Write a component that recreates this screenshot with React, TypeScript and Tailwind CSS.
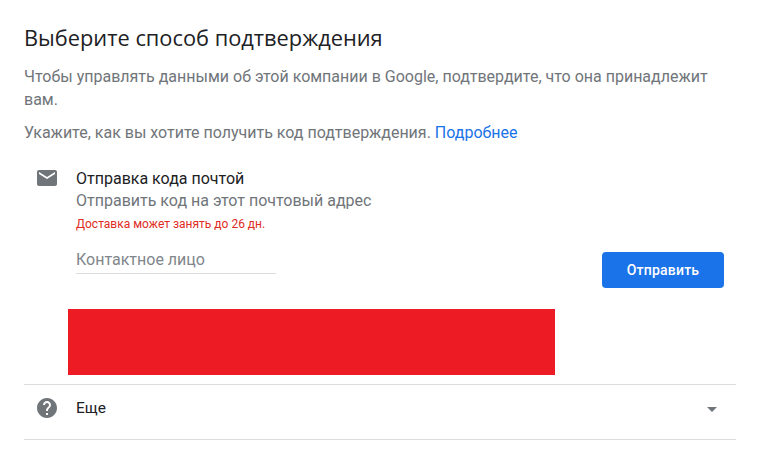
import React from "react";

const MailIcon = () => (
  <svg width="24" height="24" viewBox="0 0 24 24" fill="#70757a">
    <path d="M20 4H4c-1.1 0-2 .9-2 2v12c0 1.1.9 2 2 2h16c1.1 0 2-.9 2-2V6c0-1.1-.9-2-2-2zm0 4l-8 5-8-5V6l8 5 8-5v2z" />
  </svg>
);

const HelpIcon = () => (
  <svg width="24" height="24" viewBox="0 0 24 24" fill="#70757a">
    <path d="M12 2C6.48 2 2 6.48 2 12s4.48 10 10 10 10-4.48 10-10S17.52 2 12 2zm1 17h-2v-2h2v2zm2.07-7.75l-.9.92C13.45 12.9 13 13.5 13 15h-2v-.5c0-1.1.45-2.1 1.17-2.83l1.24-1.26c.37-.36.59-.86.59-1.41 0-1.1-.9-2-2-2s-2 .9-2 2H8c0-2.21 1.79-4 4-4s4 1.79 4 4c0 .88-.36 1.68-.93 2.25z" />
  </svg>
);

export default function App() {
  return (
    <div className="w-[777px] h-[449px] overflow-hidden bg-white font-['Roboto',sans-serif] text-[16px]">
      <div className="w-[712px] ml-6 pt-[23px]">
        {/* Title */}
        <h1 className="font-['Open_Sans','Roboto',sans-serif] font-normal text-[21.8px] leading-[30px] text-[#202124]">
          Выберите способ подтверждения
        </h1>
        <p className="mt-[12px] text-[#70757a] leading-[23px] w-[700px]">
          Чтобы управлять данными об этой компании в Google, подтвердите, что она принадлежит вам.
        </p>
        <p className="mt-[10px] text-[#70757a] leading-[24px]">
          Укажите, как вы хотите получить код подтверждения.{" "}
          <a className="text-[#1a73e8]">Подробнее</a>
        </p>

        {/* Mail option */}
        <div className="mt-[24px] flex">
          <div className="w-[41px] ml-[11px] -mt-[3px] shrink-0">
            <MailIcon />
          </div>
          <div className="flex-1 flex flex-col">
            <div className="text-[#202124] font-[450] leading-[20px]">Отправка кода почтой</div>
            <div className="text-[#70757a] leading-[22px] mt-[1px]">Отправить код на этот почтовый адрес</div>
            <div className="text-[#e02b24] text-[12px] leading-[16px] mt-[4px]">Доставка может занять до 26 дн.</div>
            <div className="flex items-start justify-between pr-3">
              <div className="mt-[18px] w-[200px] h-[24px] border-b border-[#dadce0] text-[#80868b] leading-[20px]">
                Контактное лицо
              </div>
              <button className="mt-[20px] w-[122px] h-9 rounded bg-[#1a73e8] text-white text-[14px] tracking-[0.2px] font-medium">
                Отправить
              </button>
            </div>
          </div>
        </div>
      </div>

      <div className="ml-[68px] mt-[21px] w-[487px] h-[66px] bg-[#ed1c24]" />

      {/* More options */}
      <div className="w-[712px] ml-6 mt-[9px] h-[56px] border-y border-[#dadce0] flex items-start">
        <div className="w-[41px] ml-[11px] mt-[11px] shrink-0">
          <HelpIcon />
        </div>
        <div className="flex-1 mt-[11px] text-[#202124] font-[450] text-[15.5px] leading-[24px]">Еще</div>
        <div className="mt-[22px] mr-[19px] w-0 h-0 border-x-[5.5px] border-x-transparent border-t-[5px] border-t-[#70757a]" />
      </div>
    </div>
  );
}
